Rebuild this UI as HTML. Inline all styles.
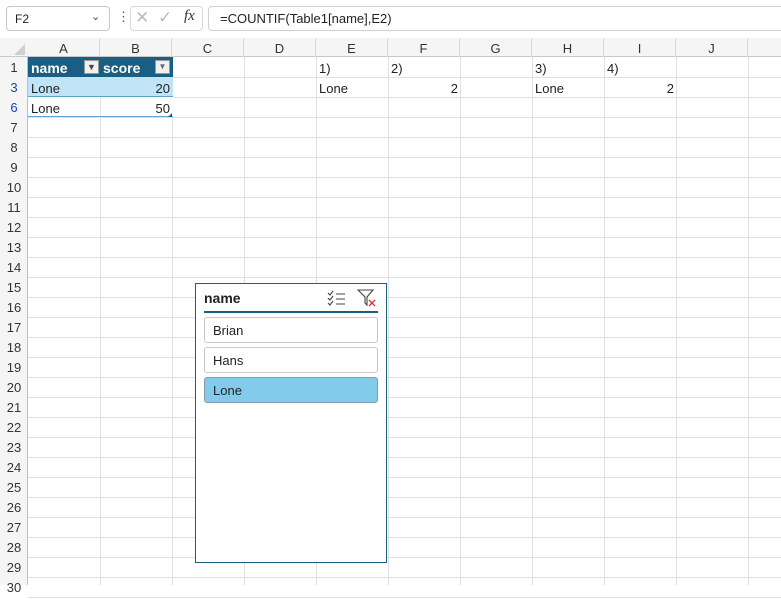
<!DOCTYPE html><html><head><style>
*{margin:0;padding:0;box-sizing:border-box}
body{width:781px;height:585px;overflow:hidden;background:#fff;font-family:"Liberation Sans",sans-serif;font-size:13px;color:#222;position:relative}
.a{position:absolute}
.ch{position:absolute;top:38px;height:19px;text-align:center;line-height:21px;color:#333;font-size:13px;border-right:1px solid #d8d8d8}
.rh{position:absolute;left:0;width:28px;height:20px;text-align:center;line-height:22px;color:#333;font-size:13px}
.vl{position:absolute;top:57px;width:1px;height:528px;background:#e0e0e0}
.hl{position:absolute;left:28px;height:1px;width:753px;background:#e0e0e0}
.t{position:absolute;height:20px;line-height:22px;font-size:13px}
.item{position:absolute;left:204px;width:174px;height:26px;border:1px solid #c8c8c8;border-radius:3px;padding-left:8px;line-height:26px;font-size:13px}
</style></head><body>
<div class="a" style="left:0;top:0;width:781px;height:38px;background:#fff"></div>
<div class="a" style="left:6px;top:6px;width:104px;height:25px;border:1px solid #c8c8c8;border-radius:4px;padding-left:8px;line-height:24px;font-size:12px">F2</div>
<div class="a" style="left:91px;top:10px;font-size:11px;color:#444">&#8964;</div>
<div class="a" style="left:117px;top:9px;font-size:13px;color:#555">&#8942;</div>
<div class="a" style="left:130px;top:6px;width:73px;height:25px;border:1px solid #d8d8d8;border-radius:4px"></div>
<div class="a" style="left:135px;top:8px;font-size:17px;color:#bbb">&#10005;</div>
<div class="a" style="left:158px;top:8px;font-size:17px;color:#bbb">&#10003;</div>
<div class="a" style="left:184px;top:8px;font-size:15px;font-style:italic;font-family:'Liberation Serif',serif;color:#333">fx</div>
<div class="a" style="left:208px;top:6px;width:580px;height:25px;border:1px solid #d0d0d0;border-radius:4px;padding-left:11px;line-height:24px;font-size:13px">=COUNTIF(Table1[name],E2)</div>
<div class="a" style="left:0;top:38px;width:781px;height:19px;background:#f5f5f5;border-bottom:1px solid #c8c8c8"></div>
<div class="a" style="left:0;top:57px;width:28px;height:528px;background:#f5f5f5;border-right:1px solid #c0c0c0"></div>
<div class="a" style="left:14px;top:44px;width:0;height:0;border-left:11px solid transparent;border-bottom:11px solid #d0d0d0"></div>
<div class="ch" style="left:28px;width:72px">A</div><div class="ch" style="left:100px;width:72px">B</div><div class="ch" style="left:172px;width:72px">C</div><div class="ch" style="left:244px;width:72px">D</div><div class="ch" style="left:316px;width:72px">E</div><div class="ch" style="left:388px;width:72px">F</div><div class="ch" style="left:460px;width:72px">G</div><div class="ch" style="left:532px;width:72px">H</div><div class="ch" style="left:604px;width:72px">I</div><div class="ch" style="left:676px;width:72px">J</div>
<div class="vl" style="left:100px"></div><div class="vl" style="left:172px"></div><div class="vl" style="left:244px"></div><div class="vl" style="left:316px"></div><div class="vl" style="left:388px"></div><div class="vl" style="left:460px"></div><div class="vl" style="left:532px"></div><div class="vl" style="left:604px"></div><div class="vl" style="left:676px"></div><div class="vl" style="left:748px"></div>
<div id="rows"></div>
<script>
var r=[1,3,6];for(var i=7;i<=30;i++)r.push(i);var h='';
r.forEach(function(n,k){var y=57+k*20;h+='<div class="rh" style="top:'+y+'px;'+((n==3||n==6)?'color:#1a3fcf':'')+'">'+n+'</div><div class="hl" style="top:'+(y+20)+'px"></div>';});
document.getElementById('rows').innerHTML=h;
</script>
<div class="a" style="left:28px;top:57px;width:145px;height:20px;background:#1b5e84"></div>
<div class="a" style="left:28px;top:77px;width:145px;height:20px;background:#c0e4f5;border-bottom:1px solid #5ba3d0"></div>
<div class="a" style="left:28px;top:97px;width:145px;height:19px;background:#fff"></div>
<div class="a" style="left:100px;top:97px;width:1px;height:20px;background:#e4e4e4"></div>
<div class="a" style="left:28px;top:116px;width:145px;height:1px;background:#5ba3d0"></div>
<div class="t" style="left:31px;top:57px;color:#fff;font-weight:bold;font-size:14px">name</div>
<div class="a" style="left:84px;top:60px;width:15px;height:14px;background:#f0f0f0;border:1px solid #999;font-size:9px;text-align:center;line-height:12px;color:#444">&#9660;</div>
<div class="t" style="left:103px;top:57px;color:#fff;font-weight:bold;font-size:14px">score</div>
<div class="a" style="left:155px;top:60px;width:15px;height:14px;background:#f0f0f0;border:1px solid #999;font-size:8px;text-align:center;line-height:12px;color:#666">&#9660;</div>
<div class="t" style="left:31px;top:78px">Lone</div><div class="t" style="left:100px;top:78px;width:70px;text-align:right">20</div>
<div class="t" style="left:31px;top:98px">Lone</div><div class="t" style="left:100px;top:98px;width:70px;text-align:right">50</div>
<div class="a" style="left:168px;top:113px;width:0;height:0;border-left:4px solid transparent;border-bottom:4px solid #1b5e84"></div>
<div class="t" style="left:319px;top:58px">1)</div><div class="t" style="left:391px;top:58px">2)</div>
<div class="t" style="left:535px;top:58px">3)</div><div class="t" style="left:607px;top:58px">4)</div>
<div class="t" style="left:319px;top:78px">Lone</div><div class="t" style="left:388px;top:78px;width:70px;text-align:right">2</div>
<div class="t" style="left:535px;top:78px">Lone</div><div class="t" style="left:604px;top:78px;width:70px;text-align:right">2</div>
<div class="a" style="left:195px;top:283px;width:192px;height:280px;background:#fff;border:1px solid #1b5e84"></div>
<div class="a" style="left:204px;top:290px;font-weight:bold;font-size:14px">name</div>
<div class="a" style="left:204px;top:311px;width:174px;height:2px;background:#1b5e84"></div>
<svg class="a" style="left:327px;top:290px" width="20" height="16" viewBox="0 0 20 16" fill="none" stroke="#444" stroke-width="1.1"><path d="M1 3l2 2 3-4M1 8l2 2 3-4M1 13l2 2 3-4M9 4h9M9 9h9M9 14h9"/></svg>
<svg class="a" style="left:357px;top:289px" width="20" height="18" viewBox="0 0 20 18" fill="none"><path d="M1 1h15l-6 7v8l-2-2V8z" stroke="#444" stroke-width="1.1"/><path d="M12 11l6 6M18 11l-6 6" stroke="#e03030" stroke-width="1.3"/></svg>
<div class="item" style="top:317px">Brian</div>
<div class="item" style="top:347px">Hans</div>
<div class="item" style="top:377px;background:#82cbea;border-color:#8a9aa4">Lone</div>
</body></html>
